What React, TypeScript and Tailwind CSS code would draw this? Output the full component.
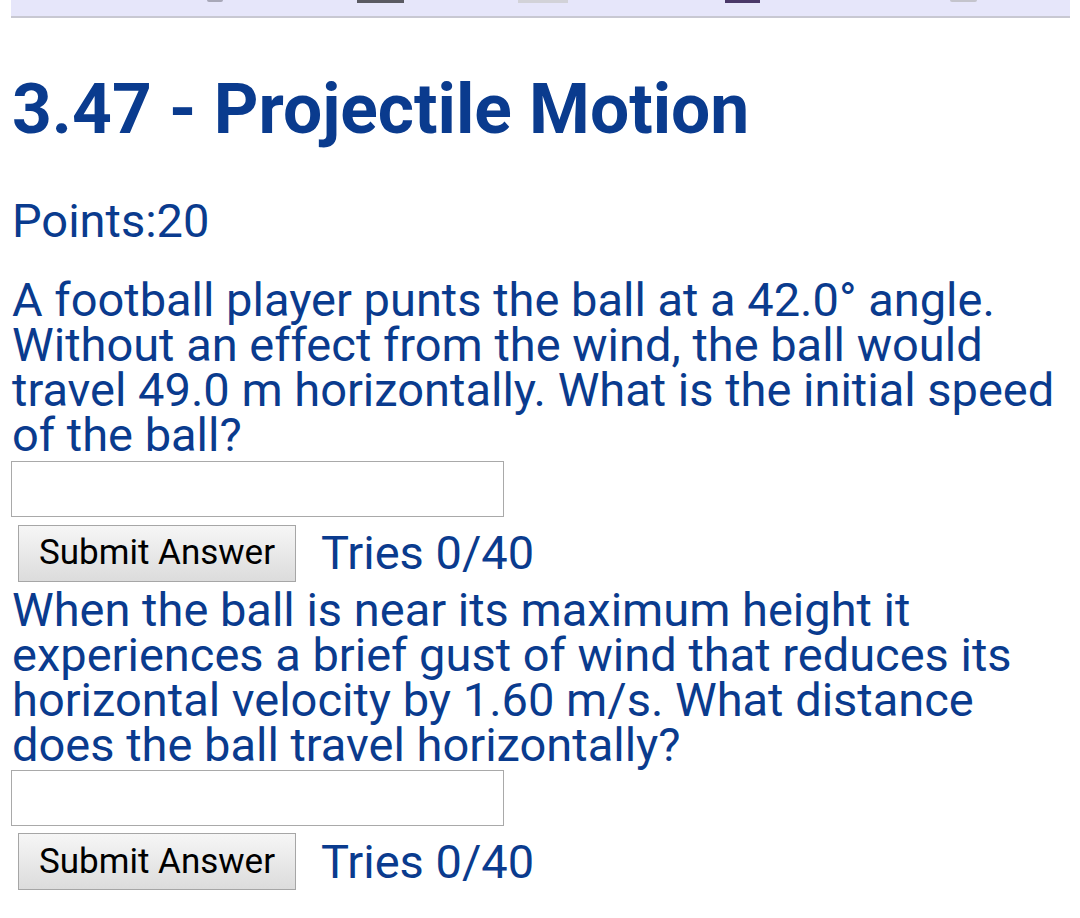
export default function App() {
  return (
    <div className="min-h-screen bg-white font-['Roboto',sans-serif] text-[#0a3b8e]">
      {/* browser toolbar remnant */}
      <div className="mx-[11px] w-[1059px] h-[18px] bg-[#e6e6fa] border-b-2 border-[#c8c8d2] flex items-start">
        <div className="ml-[196px] w-[16px] h-[2px] rounded-b-full bg-[#a8a8b8]" />
        <div className="ml-[134px] w-[47px] h-[3px] bg-[#5a5a62]" />
        <div className="ml-[114px] w-[50px] h-[3px] bg-[#d2d2d8]" />
        <div className="ml-[157px] w-[35px] h-[3px] bg-[#4a3868]" />
        <div className="ml-[190px] w-[27px] h-[2px] rounded-b-full bg-[#c4c4cc]" />
      </div>

      <div className="px-[12px]">
        <h1 className="mt-[46px] text-[69.5px] leading-[92px] font-bold">3.47 - Projectile Motion</h1>

        <p className="mt-[40px] text-[47px] leading-[50px]">Points:20</p>

        <p className="mt-[31px] text-[47px] leading-[45px]">
          A football player punts the ball at a 42.0° angle. Without an effect from the wind, the ball would travel
          49.0 m horizontally. What is the initial speed of the ball?
        </p>
        <input type="text" className="block ml-[-1px] mt-[4px] w-[493px] h-[56px] border border-[#a9a9a9] bg-white" />
        <div className="flex items-center mt-[1px]">
          <button className="ml-[6px] w-[278px] h-[57px] border border-[#a6a6a6] bg-gradient-to-b from-[#f6f6f6] to-[#dcdcdc] text-black text-[35px]">
            Submit Answer
          </button>
          <span className="ml-[25px] text-[47px]">Tries 0/40</span>
        </div>

        <p className="mt-[-2px] text-[47px] leading-[45px]">
          When the ball is near its maximum height it experiences a brief gust of wind that reduces its horizontal
          velocity by 1.60 m/s. What distance does the ball travel horizontally?
        </p>
        <input type="text" className="block ml-[-1px] mt-[3px] w-[493px] h-[56px] border border-[#a9a9a9] bg-white" />
        <div className="flex items-center mt-[1px]">
          <button className="ml-[6px] w-[278px] h-[57px] border border-[#a6a6a6] bg-gradient-to-b from-[#f6f6f6] to-[#dcdcdc] text-black text-[35px]">
            Submit Answer
          </button>
          <span className="ml-[25px] text-[47px]">Tries 0/40</span>
        </div>
      </div>
    </div>
  );
}
